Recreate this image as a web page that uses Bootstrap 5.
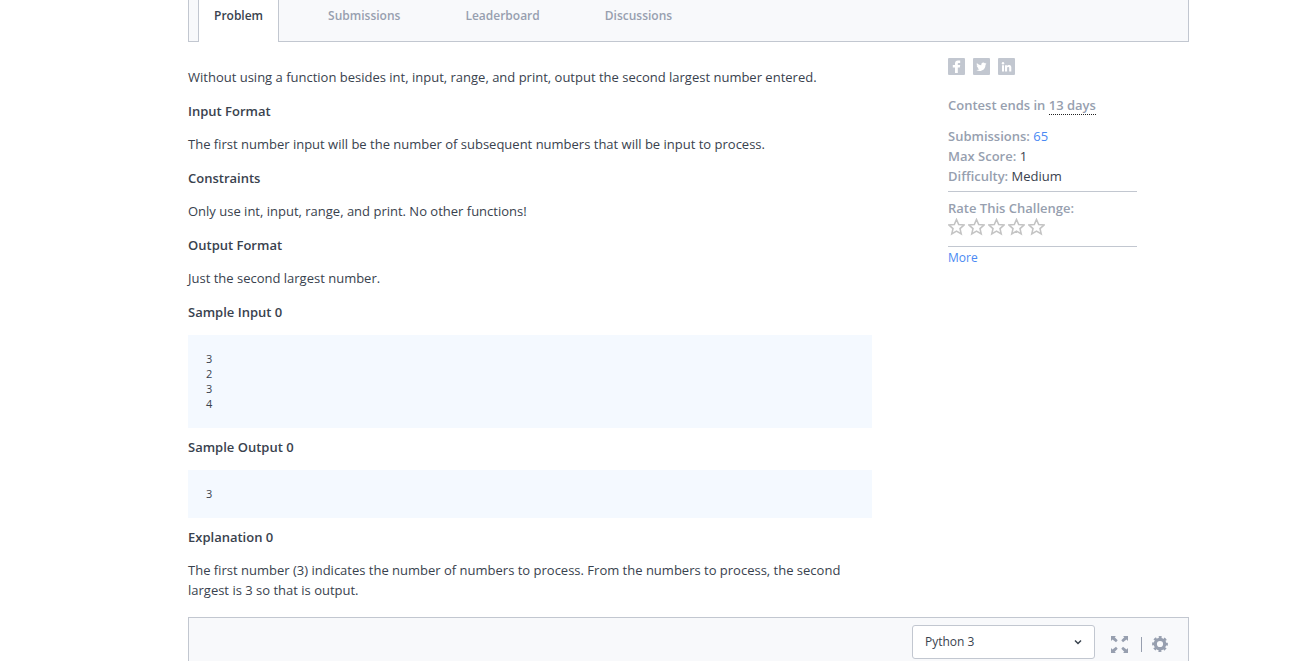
<!DOCTYPE html>
<html lang="en">
<head>
<meta charset="utf-8">
<meta name="viewport" content="width=device-width, initial-scale=1">
<title>Second Largest Number</title>
<link href="https://cdn.jsdelivr.net/npm/bootstrap@5.3.0/dist/css/bootstrap.min.css" rel="stylesheet">
<style>
  :root { --line: #c2c7d0; --panel: #f8f9fb; --muted: #979faf; --ink: #39424e; }
  body { font-family: "Open Sans", sans-serif; font-size: 14px; line-height: 20px; color: var(--ink); background: #fff; }
  a { color: #4a89f3; text-decoration: none; }
  .page-shell { padding: 0 126px 0 188px; }
  .tab-bar { background: var(--panel); border: 1px solid var(--line); border-top: 0; padding: 0 9px; gap: 33px; }
  .tab-bar .nav-link { font-size: 12px; font-weight: 600; line-height: 20px; padding: 6px 16px 15px; color: var(--muted); border: 0; border-radius: 0; }
  .tab-bar .nav-link.active { color: var(--ink); background: #fff; padding: 6px 15px 16px; margin-bottom: -1px; border: 1px solid var(--line); border-width: 0 1px; }
  .statement { padding-top: 25px; font-size: 13px; }
  .statement p { margin-bottom: 14px; }
  .statement h2 { font-size: 13px; font-weight: 600; line-height: 20px; margin-bottom: 13px; }
  .statement pre { font-family: "Open Sans", sans-serif; font-size: 11px; line-height: 15px; background: #f4f9ff; padding: 16px 18px 17px; margin-bottom: 9px; }
  .statement .closing { margin-bottom: 17px; }
  .side-info { width: 189px; margin: 16px 52px 0 76px; font-size: 13px; }
  .side-info strong { font-weight: 600; color: var(--muted); }
  .share-links { gap: 8px; margin-bottom: 20px; }
  .time-left { border-bottom: 1px dotted #222; }
  .countdown { margin-bottom: 11px; }
  .side-block { border-bottom: 1px solid var(--line); }
  .facts { padding-bottom: 5px; margin-bottom: 6px; }
  .rating { padding-bottom: 10px; }
  .more-link { font-size: 12px; }
  .star-btn { line-height: 0; width: 20px; }
  .editor-bar { background: var(--panel); border: 1px solid var(--line); border-bottom: 0; padding: 7px 20px 2px; }
  .lang-select { width: 183px; height: 34px; font-size: 12px; line-height: 20px; color: var(--ink); border-color: var(--line); border-radius: 3px; padding: 6px 30px 6px 12px;
    background-image: url("data:image/svg+xml,%3Csvg xmlns='http://www.w3.org/2000/svg' viewBox='0 0 10 10'%3E%3Cpath d='M2 3.500 5 6.500l3-3' fill='none' stroke='%2339424e' stroke-width='1.500'/%3E%3C/svg%3E"); background-size: 10px; background-position: right 11px center; }
  .tool-btn { line-height: 0; color: var(--muted); }
  .tool-rule { width: 1px; height: 15px; margin: 0 10px 0 13px; background: var(--muted); }
</style>
</head>
<body>
<div class="page-shell">
  <nav class="nav tab-bar" aria-label="Challenge">
    <a class="nav-link active" aria-current="page" href="#problem">Problem</a>
    <a class="nav-link" href="#submissions">Submissions</a>
    <a class="nav-link" href="#leaderboard">Leaderboard</a>
    <a class="nav-link" href="#discussions">Discussions</a>
  </nav>

  <div class="d-flex align-items-start">
    <main class="statement flex-fill" id="problem">
      <p>Without using a function besides int, input, range, and print, output the second largest number entered.</p>
      <h2>Input Format</h2>
      <p>The first number input will be the number of subsequent numbers that will be input to process.</p>
      <h2>Constraints</h2>
      <p>Only use int, input, range, and print. No other functions!</p>
      <h2>Output Format</h2>
      <p>Just the second largest number.</p>
      <h2>Sample Input 0</h2>
      <pre>3
2
3
4</pre>
      <h2>Sample Output 0</h2>
      <pre>3</pre>
      <h2>Explanation 0</h2>
      <p class="closing">The first number (3) indicates the number of numbers to process. From the numbers to process, the second largest is 3 so that is output.</p>
    </main>

    <aside class="side-info flex-shrink-0">
      <div class="d-flex share-links">
        <a class="d-flex" href="#facebook" aria-label="Share on Facebook"><svg width="17" height="17" viewBox="0 0 17 17"><rect width="17" height="17" rx="1" fill="#c2c7d0"/><path fill="#fff" d="M7 15V9.500H4.800V7H7V5.500C7 3.500 8.200 2.500 9.800 2.500H12.200V5h-1.400C10 5 9.800 5.300 9.800 6v1h2.400l-.4 2.500h-2V15z"/></svg></a>
        <a class="d-flex" href="#twitter" aria-label="Share on Twitter"><svg width="17" height="17" viewBox="0 0 17 17"><rect width="17" height="17" rx="1" fill="#c2c7d0"/><path fill="#fff" d="M13.500 5.600c-.4.200-.8.300-1.200.3.500-.3.700-.7.900-1.100-.4.200-.8.400-1.300.5a2.100 2.100 0 0 0-3.600 1.900C6.500 7.100 5 6.300 4 5c-.6 1-.3 2.200.6 2.800-.3 0-.6-.1-.9-.3 0 1 .7 1.900 1.600 2.100-.3.100-.6.100-.9 0 .3.900 1.100 1.500 2 1.500-.9.700-2 1-3.100.9 3.900 2.400 9.200.2 9.200-5.300.4-.3.700-.6 1-1.100z"/></svg></a>
        <a class="d-flex" href="#linkedin" aria-label="Share on LinkedIn"><svg width="17" height="17" viewBox="0 0 17 17"><rect width="17" height="17" rx="1" fill="#c2c7d0"/><path fill="#fff" d="M4 7.200h2V13.500H4zM7 7.200h2V8c.8-1.300 4.300-1.400 4.300 1.300v4.200h-2.100V10c0-1.500-2.100-1.400-2.100 0v3.500H7z"/><circle cx="5" cy="5.300" r="1.200" fill="#fff"/></svg></a>
      </div>
      <p class="countdown"><strong>Contest ends in <span class="time-left">13 days</span></strong></p>
      <div class="side-block facts">
        <div><strong>Submissions:</strong> <a href="#submissions">65</a></div>
        <div><strong>Max Score:</strong> 1</div>
        <div><strong>Difficulty:</strong> Medium</div>
      </div>
      <div class="side-block rating">
        <strong class="d-block">Rate This Challenge:</strong>
        <div class="d-flex" role="group" aria-label="Rate this challenge">
          <button type="button" class="btn border-0 p-0 text-start star-btn" aria-label="1 star"><svg width="17" height="18" viewBox="0 0 17 18"><path d="m8.500 1.500 2.200 5 5.300.5-4 3.600 1.200 5.300-4.700-2.800-4.700 2.800L5 10.600 1 7l5.300-.5z" fill="none" stroke="#c4c4c4" stroke-width="1.600"/></svg></button>
          <button type="button" class="btn border-0 p-0 text-start star-btn" aria-label="2 stars"><svg width="17" height="18" viewBox="0 0 17 18"><path d="m8.500 1.500 2.200 5 5.300.5-4 3.600 1.200 5.300-4.700-2.800-4.700 2.800L5 10.600 1 7l5.300-.5z" fill="none" stroke="#c4c4c4" stroke-width="1.600"/></svg></button>
          <button type="button" class="btn border-0 p-0 text-start star-btn" aria-label="3 stars"><svg width="17" height="18" viewBox="0 0 17 18"><path d="m8.500 1.500 2.200 5 5.300.5-4 3.600 1.200 5.300-4.700-2.800-4.700 2.800L5 10.600 1 7l5.300-.5z" fill="none" stroke="#c4c4c4" stroke-width="1.600"/></svg></button>
          <button type="button" class="btn border-0 p-0 text-start star-btn" aria-label="4 stars"><svg width="17" height="18" viewBox="0 0 17 18"><path d="m8.500 1.500 2.200 5 5.300.5-4 3.600 1.200 5.300-4.700-2.800-4.700 2.800L5 10.600 1 7l5.300-.5z" fill="none" stroke="#c4c4c4" stroke-width="1.600"/></svg></button>
          <button type="button" class="btn border-0 p-0 text-start star-btn" aria-label="5 stars"><svg width="17" height="18" viewBox="0 0 17 18"><path d="m8.500 1.500 2.200 5 5.300.5-4 3.600 1.200 5.300-4.700-2.800-4.700 2.800L5 10.600 1 7l5.300-.5z" fill="none" stroke="#c4c4c4" stroke-width="1.600"/></svg></button>
        </div>
      </div>
      <a class="more-link" href="#more">More</a>
    </aside>
  </div>

  <div class="editor-bar d-flex justify-content-end align-items-center">
    <select class="form-select lang-select" aria-label="Language">
      <option>Python 3</option>
    </select>
    <button type="button" class="btn border-0 p-0 ms-3 mt-1 tool-btn" aria-label="Full screen"><svg width="17" height="17" viewBox="0 0 17 17"><path fill="currentColor" d="M0 0h5L3.700 1.300l3 3L5 6.300 1.500 3.500 0 5zM17 0v5l-1.500-1.500L12 6.300l-1.700-2 3-3L12 0zM0 17v-5l1.500 1.500L5 10.700l1.700 2-3 3L5 17zM17 17h-5l1.300-1.300-3-3 1.700-2 3.500 2.800L17 12z"/></svg></button>
    <span class="tool-rule mt-1"></span>
    <button type="button" class="btn border-0 p-0 mt-1 tool-btn" aria-label="Editor settings"><svg width="16" height="16" viewBox="0 0 16 16"><g fill="none" stroke="currentColor"><circle cx="8" cy="8" r="4.700" stroke-width="3.200"/><circle cx="8" cy="8" r="6.700" stroke-width="2.400" stroke-dasharray="2.860 2.400" stroke-dashoffset="1.430"/></g></svg></button>
  </div>
</div>
<script src="https://cdn.jsdelivr.net/npm/bootstrap@5.3.0/dist/js/bootstrap.bundle.min.js"></script>
</body>
</html>
